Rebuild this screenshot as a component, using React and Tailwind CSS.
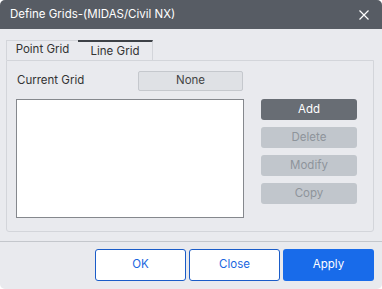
import React from "react";

export default function App() {
  const font = { fontFamily: "Inter, 'Noto Sans', sans-serif" };
  return (
    <div className="w-[382px] h-[289px] bg-white" style={font}>
      <div className="w-full h-full rounded-[5px] bg-[#e9eaee] flex flex-col overflow-hidden">
        <div className="h-[29px] shrink-0 bg-[#575c64] flex items-center justify-between pl-[10px] pr-[13px]">
          <span className="text-white text-[11.5px] leading-none">Define Grids-(MIDAS/Civil NX)</span>
          <svg width="10" height="10" viewBox="0 0 10 10">
            <path d="M0.5 0.5L9.5 9.5M9.5 0.5L0.5 9.5" stroke="white" strokeWidth="1.2" />
          </svg>
        </div>
        <div className="px-[6px] pt-[11px] shrink-0">
          <div className="flex h-[20px]">
            <div className="w-[72px] h-[20px] border-t border-l border-[#d3d5da] flex items-center justify-center text-[11.5px] text-[#333] pb-[2px]">
              Point Grid
            </div>
            <div className="w-[75px] h-[20px] border-t-2 border-t-[#3d4146] border-r border-r-[#d3d5da] flex items-center justify-center text-[11.5px] text-[#333] pt-[2px]">
              Line Grid
            </div>
          </div>
          <div className="w-[368px] h-[172px] border border-[#d3d5da] rounded-b-[3px] pl-[9px] pt-[10px]">
            <div className="flex items-center h-[20px]">
              <span className="w-[122px] pl-[1px] text-[11.5px] text-[#333]">Current Grid</span>
              <div className="w-[105px] h-[20px] rounded-[2px] border border-[#c5c8cd] bg-[#dfe1e5] flex items-center justify-center text-[11.5px] text-[#444]">
                None
              </div>
            </div>
            <div className="flex mt-[8px]">
              <div className="w-[228px] h-[119px] bg-white border border-[#85888d]"></div>
              <div className="ml-[17px] flex flex-col gap-[7px]">
                <div className="w-[96px] h-[21px] rounded-[3px] bg-[#686d74] text-white text-[11.5px] flex items-center justify-center">Add</div>
                <div className="w-[96px] h-[21px] rounded-[3px] bg-[#c1c6cc] text-[#8e949b] text-[11.5px] flex items-center justify-center">Delete</div>
                <div className="w-[96px] h-[21px] rounded-[3px] bg-[#c1c6cc] text-[#8e949b] text-[11.5px] flex items-center justify-center">Modify</div>
                <div className="w-[96px] h-[21px] rounded-[3px] bg-[#c1c6cc] text-[#8e949b] text-[11.5px] flex items-center justify-center">Copy</div>
              </div>
            </div>
          </div>
        </div>
        <div className="mt-[9px] border-t border-[#c4c7cc]"></div>
        <div className="flex justify-end gap-[3px] pr-[8px] pt-[7px]">
          <div className="w-[91px] h-[32px] rounded-[3px] border border-[#1a5cc8] bg-white text-[#1a66e0] text-[11.5px] flex items-center justify-center">OK</div>
          <div className="w-[91px] h-[32px] rounded-[3px] border border-[#1a5cc8] bg-white text-[#1a66e0] text-[11.5px] flex items-center justify-center">Close</div>
          <div className="w-[91px] h-[32px] rounded-[3px] bg-[#186bea] text-white text-[11.5px] flex items-center justify-center">Apply</div>
        </div>
      </div>
    </div>
  );
}
